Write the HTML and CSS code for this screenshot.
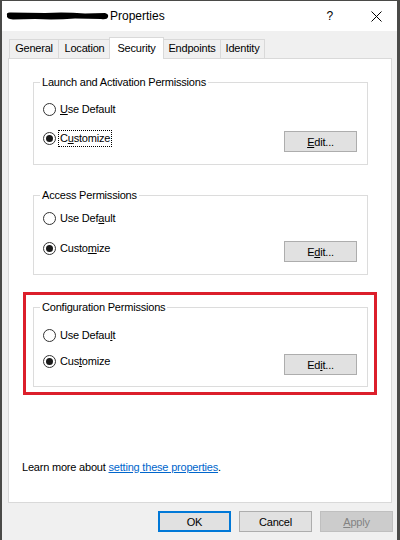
FILE: index.html
```html
<!DOCTYPE html>
<html>
<head>
<meta charset="utf-8">
<link rel="stylesheet" href="styles.css">
</head>
<body>
<div class="window">
  <div class="titlebar">
    <div class="title">
      <svg class="redact" width="104" height="10" viewBox="0 0 104 10"><path d="M2 4 Q1 1 6 1.5 L40 2 Q60 1 80 2.5 L100 2 Q104 3 103 6 Q102 9 96 8 L70 7.5 Q50 9 30 8 L8 8.5 Q1 8 2 4 Z" fill="#000"/></svg>
      <span class="title-text">Properties</span>
    </div>
    <div class="title-btns">
      <span class="help">?</span>
      <svg class="close" width="11" height="11" viewBox="0 0 11 11"><path d="M0.5 0.5 L10.5 10.5 M10.5 0.5 L0.5 10.5" stroke="#000" stroke-width="1" fill="none"/></svg>
    </div>
  </div>
  <div class="client">
    <div class="tabs">
      <div class="tab t-general">General</div>
      <div class="tab t-location">Location</div>
      <div class="tab active t-security">Security</div>
      <div class="tab t-endpoints">Endpoints</div>
      <div class="tab t-identity">Identity</div>
    </div>
    <div class="panel">
      <fieldset class="group g1">
        <legend>Launch and Activation Permissions</legend>
        <div class="radio-row first"><span class="radio"></span><span class="lbl"><u>U</u>se Default</span></div>
        <div class="row2">
          <div class="radio-row"><span class="radio checked"></span><span class="lbl focus">C<u>u</u>stomize</span></div>
          <button class="btn edit"><u>E</u>dit...</button>
        </div>
      </fieldset>
      <fieldset class="group g2">
        <legend>Access Permissions</legend>
        <div class="radio-row first"><span class="radio"></span><span class="lbl">Use Def<u>a</u>ult</span></div>
        <div class="row2">
          <div class="radio-row"><span class="radio checked"></span><span class="lbl">Custo<u>m</u>ize</span></div>
          <button class="btn edit">E<u>d</u>it...</button>
        </div>
      </fieldset>
      <div class="highlight">
        <fieldset class="group g3">
          <legend>Configuration Permissions</legend>
          <div class="radio-row first"><span class="radio"></span><span class="lbl">Use Defau<u>l</u>t</span></div>
          <div class="row2">
            <div class="radio-row"><span class="radio checked"></span><span class="lbl">Cus<u>t</u>omize</span></div>
            <button class="btn edit">Ed<u>i</u>t...</button>
          </div>
        </fieldset>
      </div>
      <p class="learn">Learn more about <a href="#">setting these properties</a>.</p>
    </div>
    <div class="buttons">
      <button class="btn default">OK</button>
      <button class="btn">Cancel</button>
      <button class="btn disabled"><u>A</u>pply</button>
    </div>
  </div>
</div>
</body>
</html>
```

FILE: styles.css
```css
html, body {
  margin: 0;
  padding: 0;
}
body {
  background: #4a4a48;
  width: 400px;
  height: 540px;
  overflow: hidden;
  font-family: "Liberation Sans", Arial, sans-serif;
  font-size: 11px;
  letter-spacing: -0.2px;
  color: #000;
}
.window {
  margin: 1px 0 0 2px;
  width: 395px;
  height: 539px;
  background: #f0f0f0;
  display: flex;
  flex-direction: column;
}
.titlebar {
  height: 30px;
  background: #fff;
  display: flex;
  align-items: center;
  justify-content: space-between;
  flex: none;
}
.title {
  display: flex;
  align-items: center;
  padding-left: 3px;
}
.redact {
  display: block;
}
.title-text {
  font-size: 12px;
  letter-spacing: 0;
  margin-left: 1px;
  padding-bottom: 1px;
}
.title-btns {
  display: flex;
  align-items: center;
  padding-right: 15px;
}
.help {
  font-size: 12px;
  margin-right: 38px;
}
.close {
  display: block;
}
.client {
  padding: 6px 0 0 6px;
  flex: 1;
}
.tabs {
  display: flex;
  align-items: flex-end;
  height: 21px;
  padding-left: 1px;
}
.tab {
  box-sizing: border-box;
  height: 19px;
  line-height: 17px;
  border: 1px solid #d9d9d9;
  border-bottom: none;
  background: #f0f0f0;
  text-align: center;
  margin-right: -1px;
  position: relative;
}
.tab.active {
  height: 22px;
  line-height: 20px;
  background: #fff;
  margin: 0 -1px 0 -1px;
  z-index: 2;
  bottom: -1px;
  padding-bottom: 1px;
}
.t-general { width: 50px; }
.t-location { width: 53px; }
.t-security { width: 55px; }
.t-endpoints { width: 58px; }
.t-identity { width: 45px; }
.panel {
  box-sizing: border-box;
  width: 384px;
  height: 445px;
  background: #fff;
  border: 1px solid #d9d9d9;
  padding: 16px 0 0 24px;
  position: relative;
  z-index: 1;
}
.group {
  box-sizing: border-box;
  width: 335px;
  margin: 0;
  border: 1px solid #dcdcdc;
  padding: 0 10px 0 9px;
  min-width: 0;
}
.group legend {
  padding: 0 2px;
  margin-left: -3px;
  line-height: 14px;
}
.radio-row {
  display: flex;
  align-items: center;
  height: 16px;
}
.radio {
  box-sizing: border-box;
  width: 13px;
  height: 13px;
  border: 1px solid #333;
  border-radius: 50%;
  background: #fff;
  display: flex;
  align-items: center;
  justify-content: center;
  flex: none;
}
.radio.checked::after {
  content: "";
  width: 7px;
  height: 7px;
  border-radius: 50%;
  background: #1a1a1a;
}
.lbl {
  margin-left: 3px;
  padding: 1px 1px;
  line-height: 13px;
}
.lbl.focus {
  outline: 1px dotted #000;
  outline-offset: 0;
}
.row2 {
  display: flex;
  justify-content: space-between;
  align-items: flex-start;
}
.btn {
  box-sizing: border-box;
  width: 73px;
  height: 21px;
  background: #e1e1e1;
  border: 1px solid #adadad;
  font-family: inherit;
  font-size: 11px;
  letter-spacing: -0.2px;
  color: #000;
  padding: 0;
  margin: 0;
  line-height: 18px;
}
.edit {
  margin-top: 1px;
}
.g1 .first { margin-top: 12px; }
.g1 .row2 { margin-top: 13px; margin-bottom: 12px; }
.g2 { margin-top: 23px; }
.g2 .first { margin-top: 8px; }
.g2 .row2 { margin-top: 14px; margin-bottom: 12px; }
.g3 .first { margin-top: 13px; }
.g3 .row2 { margin-top: 10px; margin-bottom: 11px; }
.highlight {
  box-sizing: border-box;
  width: 354px;
  margin: 17px 0 0 -10px;
  border: 3px solid #dc1f2b;
  padding: 5px 6px 5px 7px;
}
.learn {
  margin: 65px 0 0 -11px;
  line-height: 14px;
}
.learn a {
  color: #0066cc;
  text-decoration: underline;
}
.buttons {
  display: flex;
  justify-content: flex-end;
  gap: 8px;
  width: 385px;
  margin-top: 8px;
}
.btn.default {
  border: 2px solid #0078d7;
}
.btn.disabled {
  background: #cccccc;
  border-color: #bfbfbf;
  color: #838383;
}
```
